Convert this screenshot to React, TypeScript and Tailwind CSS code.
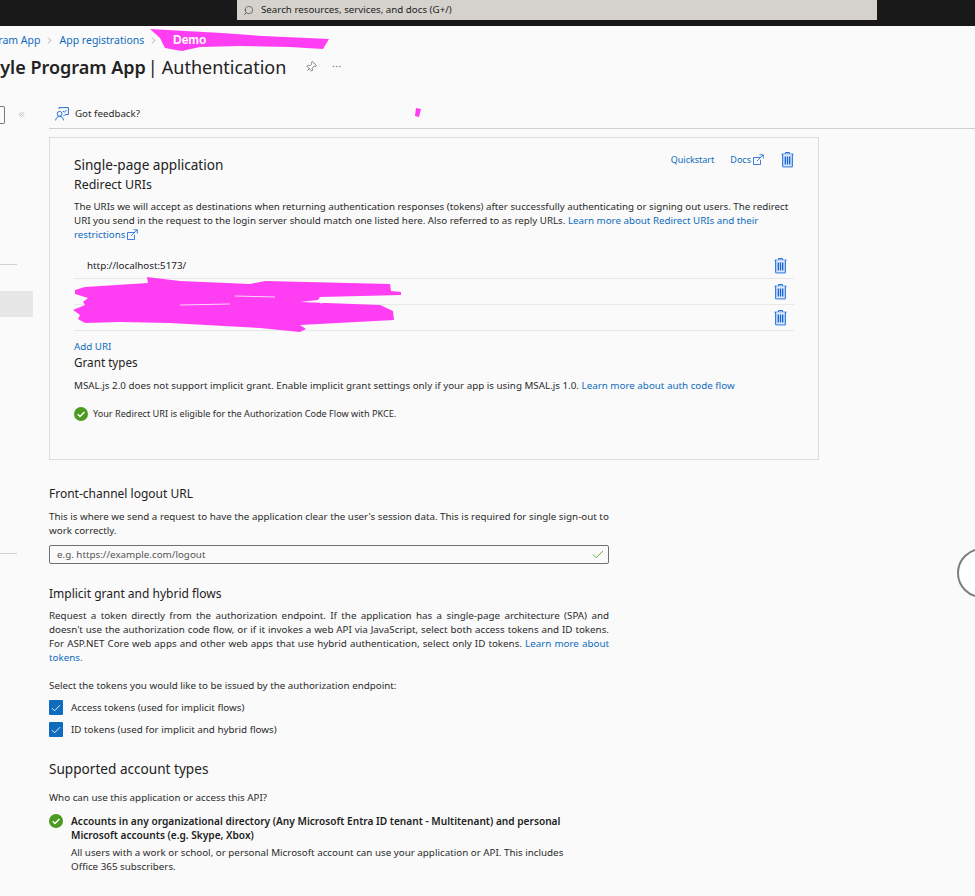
import { ChevronRight, ChevronsLeft, Ellipsis, Pin, Search } from "lucide-react"

const font = "font-['Noto_Sans','Open_Sans',sans-serif]"

function TrashIcon() {
  return (
    <svg width="13" height="16" viewBox="0 0 13 16" fill="none" className="text-[#0f62d6] block">
      <path d="M4.500 1.800V.6h4v1.200M.5 2.200h12" stroke="currentColor" />
      <path d="M1.700 2.200v12.600h9.600V2.200" stroke="currentColor" fill="#dbe8fa" />
      <path d="M4.300 4.500v8M6.500 4.500v8M8.700 4.500v8" stroke="currentColor" strokeWidth="1.300" />
      <path d="M1.700 15h9.600" stroke="#9dbcf0" />
    </svg>
  )
}

function ExternalIcon() {
  return (
    <svg width="11" height="11" viewBox="0 0 11 11" fill="none" stroke="#0f62d6" strokeWidth="0.8" className="inline-block ml-[2px] align-[-2px]">
      <path d="M7.500 3.500H.5v7h7V5.800" />
      <path d="M4 7l6-6M6.600.8h3.700v3.700" />
    </svg>
  )
}

function GreenCheck({ size }: { size: number }) {
  return (
    <svg width={size} height={size} viewBox="0 0 14 14" className="shrink-0">
      <circle cx="7" cy="7" r="7" fill="#4b9a22" />
      <path d="M3.700 7.200l2.300 2.300 4.400-4.600" fill="none" stroke="#fff" strokeWidth="1.500" />
    </svg>
  )
}

function Checkbox({ label }: { label: string }) {
  return (
    <div className="flex items-center gap-[8px] h-[15px]">
      <span className="w-[14px] h-[15px] bg-[#0f6cbd] rounded-[1px] flex items-center justify-center">
        <svg width="10" height="8" viewBox="0 0 10 8" fill="none" stroke="#fff" strokeWidth="0.9">
          <path d="M1 4.200l2.600 2.600L9 1.200" />
        </svg>
      </span>
      <span>{label}</span>
    </div>
  )
}

function UriRow({ uri }: { uri: string }) {
  return (
    <div className="h-[26px] border-b border-[#e8e8e8] flex items-center justify-between pl-[13px] pr-[7px] text-[#222]">
      <span>{uri}</span>
      <TrashIcon />
    </div>
  )
}

export default function App() {
  return (
    <div className={`${font} relative w-[975px] h-[896px] overflow-hidden bg-[#fafafa] text-[9.800px] leading-[14px] text-[#2b2b2b]`}>
      <header className="h-[26px] bg-[#191919] pl-[237px]">
        <div className="w-[640px] h-[20px] bg-[#d5d1cd] flex items-center gap-[6px] pl-[6px] text-[9.750px] text-[#222]">
          <Search size={11} strokeWidth={1.200} className="-scale-x-100" />
          <span className="ml-[1px]">Search resources, services, and docs (G+/)</span>
        </div>
      </header>

      <nav className="h-[28px] flex items-center -ml-[25px] text-[#0f6cbd] gap-[4px] text-[10.500px]">
        <span>Program App</span>
        <ChevronRight size={11} strokeWidth={1} className="text-[#555]" />
        <span>App registrations</span>
        <ChevronRight size={11} strokeWidth={1} className="text-[#555]" />
      </nav>

      <div className="h-[27px] pb-[2px] flex items-center -ml-[17px] text-[#222]">
        <h1 className="text-[18px] whitespace-nowrap">
          <span className="font-semibold">Style Program App</span>
          <span className="ml-[2px]">|</span>
          <span className="ml-[4px]">Authentication</span>
        </h1>
        <Pin size={12} strokeWidth={1} className="ml-[19px] rotate-45" />
        <Ellipsis size={11} strokeWidth={1} className="ml-[14px] text-[#666]" />
      </div>

      <div className="mt-[20px] flex h-[28px]">
        <div className="w-[49px] shrink-0 flex items-start pt-[5px]">
          <div className="w-[5px] h-[18px] border border-l-0 border-[#777] rounded-r-[2px]" />
          <ChevronsLeft size={9} strokeWidth={1.300} className="ml-[12px] mt-[4px] text-[#666]" />
        </div>
        <div className="flex-1 border-b border-[#cfcfcf] flex items-center gap-[6px] pl-[6px] pb-[2px]">
          <svg width="14" height="14" viewBox="0 0 14 14" fill="none" stroke="#0f62d6" strokeWidth="0.9">
            <path d="M4 2V.6h9.400v7H10l-1.700 1.700" />
            <circle cx="4.600" cy="6.800" r="2.400" />
            <path d="M.6 13.400c.4-2.600 2-4 4-4s3.600 1.400 4 4" />
            <path d="M8 4l1.300 1.300L11.500 3" />
          </svg>
          <span className="text-[9.750px]">Got feedback?</span>
        </div>
      </div>

      <div className="flex">
        <aside className="w-[49px] shrink-0 pt-[135px]">
          <div className="w-[17px] border-t border-[#d0d0d0]" />
          <div className="w-[33px] h-[26px] mt-[26px] bg-[#e6e6e6]" />
          <div className="w-[17px] border-t border-[#d0d0d0] mt-[236px]" />
        </aside>

        <main className="flex-1 pt-[8px]">
          <section className="w-[770px] h-[323px] border border-[#dcdcdc] pl-[24px] pr-[24px] pt-[17px]">
            <div className="flex items-start justify-between">
              <div>
                <h2 className="text-[13.600px] leading-[19px] text-[#222]">Single-page application</h2>
                <h3 className="text-[12.400px] leading-[17px] mt-[2px] text-[#222]">Redirect URIs</h3>
              </div>
              <div className="flex items-start text-[#0f6cbd] text-[9px] -mt-[3px]">
                <span className="mt-[1px]">Quickstart</span>
                <span className="ml-[16px] mt-[1px]">Docs</span>
                <span className="mt-[1px]"><ExternalIcon /></span>
                <span className="ml-[17px]"><TrashIcon /></span>
              </div>
            </div>

            <p className="mt-[7px] w-[720px] text-[9.750px]">
              The URIs we will accept as destinations when returning authentication responses (tokens) after successfully authenticating or signing out users. The redirect URI you send in the request to the login server should match one listed here. Also referred to as reply URLs.{" "}
              <span className="text-[#0f6cbd]">
                Learn more about Redirect URIs and their restrictions
                <ExternalIcon />
              </span>
            </p>

            <div className="mt-[11px] w-[720px]">
              <UriRow uri="http://localhost:5173/" />
              <UriRow uri="" />
              <UriRow uri="" />
            </div>

            <div className="mt-[9px] text-[#0f6cbd]">Add URI</div>
            <h3 className="text-[11.700px] leading-[17px] text-[#222]">Grant types</h3>
            <p className="mt-[8px]">
              MSAL.js 2.0 does not support implicit grant. Enable implicit grant settings only if your app is using MSAL.js 1.0.{" "}
              <span className="text-[#0f6cbd]">Learn more about auth code flow</span>
            </p>
            <div className="mt-[14px] flex items-center gap-[5px] text-[9.150px]">
              <GreenCheck size={14} />
              <span>Your Redirect URI is eligible for the Authorization Code Flow with PKCE.</span>
            </div>
          </section>

          <section className="w-[560px]">
            <h3 className="mt-[26px] text-[12px] leading-[16px] text-[#222]">Front-channel logout URL</h3>
            <p className="mt-[8px]">This is where we send a request to have the application clear the user's session data. This is required for single sign-out to work correctly.</p>
            <div className="mt-[7px] h-[19px] border border-[#707070] rounded-[2px] flex items-center justify-between pl-[7px] pr-[4px] text-[#555]">
              <span>e.g. https://example.com/logout</span>
              <svg width="12" height="9" viewBox="0 0 12 9" fill="none" stroke="#62ad40">
                <path d="M1 4.500l3.200 3.200L11 1" />
              </svg>
            </div>

            <h3 className="mt-[22px] text-[12px] leading-[16px] text-[#222]">Implicit grant and hybrid flows</h3>
            <p className="mt-[7px] text-justify">
              Request a token directly from the authorization endpoint. If the application has a single-page architecture (SPA) and doesn't use the authorization code flow, or if it invokes a web API via JavaScript, select both access tokens and ID tokens. For ASP.NET Core web apps and other web apps that use hybrid authentication, select only ID tokens.{" "}
              <span className="text-[#0f6cbd]">Learn more about tokens.</span>
            </p>
            <p className="mt-[14px]">Select the tokens you would like to be issued by the authorization endpoint:</p>
            <div className="mt-[7px] flex flex-col gap-[7px]">
              <Checkbox label="Access tokens (used for implicit flows)" />
              <Checkbox label="ID tokens (used for implicit and hybrid flows)" />
            </div>

            <h2 className="mt-[22px] text-[13.600px] leading-[19px] text-[#222]">Supported account types</h2>
            <p className="mt-[13px]">Who can use this application or access this API?</p>
            <div className="mt-[9px] flex gap-[8px] w-[530px]">
              <GreenCheck size={14} />
              <div>
                <div className="font-semibold text-[#222] text-[10.150px]">Accounts in any organizational directory (Any Microsoft Entra ID tenant - Multitenant) and personal Microsoft accounts (e.g. Skype, Xbox)</div>
                <p className="mt-[4px]">All users with a work or school, or personal Microsoft account can use your application or API. This includes Office 365 subscribers.</p>
              </div>
            </div>
          </section>
        </main>
      </div>

      <div className="absolute left-[957px] top-[548px] w-[50px] h-[50px] rounded-full bg-white border-2 border-[#7d7d7d]" />

      <svg className="absolute inset-0 pointer-events-none" width="975" height="896" viewBox="0 0 975 896" fill="#ff3df2">
        <path d="M150 29L222 33L262 36L329 39L323 49L290 47L240 46L200 47L182 51L165 48L160 38Z" />
        <path d="M416 108L421 109L419 117L415 116Z" />
        <path d="M147 277L180 281L250 284L265 281L390 284L391 291L401 292L401 295L320 297L318 300L300 302L380 305L393 311L394 320L300 325L306 329L300 332L260 328L170 323L120 322L85 323L78 319L80 315L73 310L85 305L83 302L88 298L75 294L75 290L85 287L148 283Z" />
        <path d="M235 296L275 297M180 305L230 304M320 303L345 300" stroke="#fafafa" strokeWidth="0.8" fill="none" />
      </svg>
      <span className="absolute left-[173px] top-[33px] text-[12px] font-bold text-white font-['Liberation_Sans',sans-serif]">Demo</span>
    </div>
  )
}
